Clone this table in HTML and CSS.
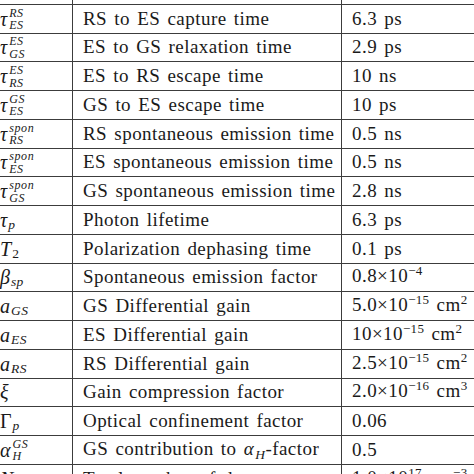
FILE: index.html
```html
<!DOCTYPE html>
<html>
<head>
<meta charset="utf-8">
<link rel="stylesheet" href="styles.css">
</head>
<body>
<div class="frame">
<table class="params">
  <tr class="head"><td class="c1"></td><td class="c2"></td><td class="c3"></td></tr>
  <tr><td class="c1"><span class="sym"><i class="b">τ</i><span class="ss"><span>RS</span><span>ES</span></span></span></td><td class="c2">RS to ES capture time</td><td class="c3">6.3 ps</td></tr>
  <tr><td class="c1"><span class="sym"><i class="b">τ</i><span class="ss"><span>ES</span><span>GS</span></span></span></td><td class="c2">ES to GS relaxation time</td><td class="c3">2.9 ps</td></tr>
  <tr><td class="c1"><span class="sym"><i class="b">τ</i><span class="ss"><span>ES</span><span>RS</span></span></span></td><td class="c2">ES to RS escape time</td><td class="c3">10 ns</td></tr>
  <tr><td class="c1"><span class="sym"><i class="b">τ</i><span class="ss"><span>GS</span><span>ES</span></span></span></td><td class="c2">GS to ES escape time</td><td class="c3">10 ps</td></tr>
  <tr><td class="c1"><span class="sym"><i class="b">τ</i><span class="ss"><span>spon</span><span>RS</span></span></span></td><td class="c2">RS spontaneous emission time</td><td class="c3">0.5 ns</td></tr>
  <tr><td class="c1"><span class="sym"><i class="b">τ</i><span class="ss"><span>spon</span><span>ES</span></span></span></td><td class="c2">ES spontaneous emission time</td><td class="c3">0.5 ns</td></tr>
  <tr><td class="c1"><span class="sym"><i class="b">τ</i><span class="ss"><span>spon</span><span>GS</span></span></span></td><td class="c2">GS spontaneous emission time</td><td class="c3">2.8 ns</td></tr>
  <tr><td class="c1"><span class="sym"><i class="b">τ</i><i class="sb">p</i></span></td><td class="c2">Photon lifetime</td><td class="c3">6.3 ps</td></tr>
  <tr><td class="c1"><span class="sym"><i class="b">T</i><span class="sb">2</span></span></td><td class="c2">Polarization dephasing time</td><td class="c3">0.1 ps</td></tr>
  <tr><td class="c1"><span class="sym"><i class="b">β</i><i class="sb">sp</i></span></td><td class="c2">Spontaneous emission factor</td><td class="c3">0.8×10<sup>−4</sup></td></tr>
  <tr><td class="c1"><span class="sym"><i class="b">a</i><i class="sb">GS</i></span></td><td class="c2">GS Differential gain</td><td class="c3">5.0×10<sup>−15</sup> cm<sup>2</sup></td></tr>
  <tr><td class="c1"><span class="sym"><i class="b">a</i><i class="sb">ES</i></span></td><td class="c2">ES Differential gain</td><td class="c3">10×10<sup>−15</sup> cm<sup>2</sup></td></tr>
  <tr><td class="c1"><span class="sym"><i class="b">a</i><i class="sb">RS</i></span></td><td class="c2">RS Differential gain</td><td class="c3">2.5×10<sup>−15</sup> cm<sup>2</sup></td></tr>
  <tr><td class="c1"><span class="sym"><i class="b">ξ</i></span></td><td class="c2">Gain compression factor</td><td class="c3">2.0×10<sup>−16</sup> cm<sup>3</sup></td></tr>
  <tr><td class="c1"><span class="sym"><span class="b">Γ</span><i class="sb">p</i></span></td><td class="c2">Optical confinement factor</td><td class="c3">0.06</td></tr>
  <tr><td class="c1"><span class="sym"><i class="b">α</i><span class="ss"><span>GS</span><span>H</span></span></span></td><td class="c2">GS contribution to <i>α</i><i class="sbi">H</i>-factor</td><td class="c3">0.5</td></tr>
  <tr><td class="c1"><span class="sym"><i class="b">N</i><i class="sb">B</i></span></td><td class="c2">Total number of dots</td><td class="c3">1.0×10<sup>17</sup> cm<sup>−3</sup></td></tr>
</table>
</div>
</body>
</html>
```
FILE: styles.css
```css
html, body {
  margin: 0;
  padding: 0;
  background: #fff;
}
.frame {
  width: 474px;
  height: 474px;
  overflow: hidden;
}
.params {
  border-collapse: collapse;
  margin-top: -25px;
  margin-left: -10px;
  font-family: "Liberation Serif", "Times New Roman", serif;
  font-size: 19px;
  color: #1a1a1a;
  table-layout: fixed;
  width: 600px;
}
.params tr {
  height: 28.75px;
}
.params td {
  border: 1px solid #3c3c3c;
  padding: 0;
  white-space: nowrap;
  vertical-align: middle;
  line-height: 20px;
}
.c1 {
  width: 72px;
  padding-left: 9px !important;
}
.c2 {
  width: 258px;
  padding-left: 10px !important;
  letter-spacing: 0.45px;
  word-spacing: 2px;
}
.c3 {
  padding-left: 10px !important;
  letter-spacing: 0.45px;
  word-spacing: 2px;
}
.sym {
  display: inline-flex;
  align-items: center;
  height: 27px;
}
.b {
  font-size: 20px;
  line-height: 1;
}
.ss {
  display: inline-flex;
  flex-direction: column;
  gap: 2px;
  font-style: italic;
  font-size: 12px;
  line-height: 10.5px;
  margin-left: 2px;
  margin-top: 1px;
  letter-spacing: 0.6px;
}
.sb {
  font-size: 13.5px;
  position: relative;
  top: 5px;
  margin-left: 1px;
  letter-spacing: 0.4px;
}
.sbi {
  font-size: 13.5px;
  position: relative;
  top: 4px;
  margin-left: 1px;
}
sup {
  font-size: 13px;
  vertical-align: 0;
  position: relative;
  top: -7px;
  letter-spacing: 0.3px;
}
```
